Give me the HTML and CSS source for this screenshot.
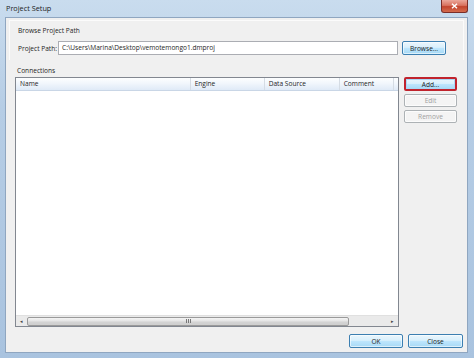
FILE: index.html
```html
<!DOCTYPE html>
<html>
<head>
<meta charset="utf-8">
<link rel="stylesheet" href="styles.css">
</head>
<body>
<div class="window">
  <div class="titlebar">
    <span class="title">Project Setup</span>
    <div class="close-btn">
      <svg width="7" height="6" viewBox="0 0 7 6"><path d="M1 0.8 L6 5.2 M6 0.8 L1 5.2" stroke="#fff" stroke-width="1.5"/></svg>
    </div>
  </div>
  <div class="client">
    <div class="group">
      <div class="group-title">Browse Project Path</div>
      <div class="path-row">
        <span class="label">Project Path:</span>
        <div class="input">C:\Users\Marina\Desktop\vemotemongo1.dmproj</div>
        <div class="btn browse">Browse...</div>
      </div>
    </div>
    <div class="conn-title">Connections</div>
    <div class="conn-row">
      <div class="listview">
        <div class="header">
          <div class="col c-name">Name</div>
          <div class="col c-engine">Engine</div>
          <div class="col c-ds">Data Source</div>
          <div class="col c-comment">Comment</div>
          <div class="col c-rest"></div>
        </div>
        <div class="list-body"></div>
        <div class="hscroll">
          <div class="arrow">&#9666;</div>
          <div class="track"><div class="thumb"><span class="grip"></span></div></div>
          <div class="arrow">&#9656;</div>
        </div>
      </div>
      <div class="side-buttons">
        <div class="btn add">Add...</div>
        <div class="btn disabled">Edit</div>
        <div class="btn disabled">Remove</div>
      </div>
    </div>
    <div class="footer">
      <div class="btn ok">OK</div>
      <div class="btn closeb">Close</div>
    </div>
  </div>
</div>
</body>
</html>
```
FILE: styles.css
```css
* { box-sizing: border-box; }
html, body { margin: 0; padding: 0; }
body {
  width: 474px;
  height: 358px;
  overflow: hidden;
  font-family: "Open Sans", "Noto Sans", sans-serif;
  font-size: 6.6px;
  color: #1e1e1e;
  background: #9fb6cf;
}
.window {
  width: 474px;
  height: 358px;
  display: flex;
  flex-direction: column;
  background: linear-gradient(180deg, #c9dcee 0%, #b6cde5 30%, #a9c3df 100%);
  padding: 0 6px 5px 5px;
}
.titlebar {
  height: 17px;
  display: flex;
  align-items: flex-start;
  justify-content: space-between;
}
.title {
  font-size: 7.3px;
  color: #1b1b1b;
  padding-left: 1px;
  margin-top: 3px;
  white-space: nowrap;
}
.close-btn {
  width: 27px;
  height: 13px;
  border: 1px solid #7a2e28;
  border-top: none;
  border-radius: 0 0 3px 3px;
  background: linear-gradient(180deg, #eba79a 0%, #d9735f 45%, #c3442d 55%, #d46c4e 100%);
  display: flex;
  align-items: center;
  justify-content: center;
}
.client {
  flex: 1;
  background: #f0f0f0;
  border: 1px solid #8fa6c0;
  display: flex;
  flex-direction: column;
}
.group {
  margin: 2px 3px 0 3px;
  border: 1px solid #fbfbfb;
  border-bottom: none;
  padding: 5px 0 0 8px;
  height: 40px;
}
.group-title { line-height: 9px; white-space: nowrap; }
.path-row {
  display: flex;
  align-items: center;
  margin-top: 6px;
}
.label { width: 40px; white-space: nowrap; flex: none; }
.input {
  width: 340px;
  height: 14px;
  border: 1px solid #abadb3;
  background: #fff;
  line-height: 12px;
  padding-left: 3px;
  white-space: nowrap;
  flex: none;
}
.btn {
  height: 14px;
  border: 1px solid #3c7fb1;
  border-radius: 2px;
  background: linear-gradient(180deg, #eaf6fd 0%, #d9f0fc 45%, #bee6fd 50%, #a7d9f5 100%);
  display: flex;
  align-items: center;
  justify-content: center;
  color: #1e1e1e;
  white-space: nowrap;
  box-shadow: inset 0 0 0 1px rgba(255,255,255,0.6);
  flex: none;
}
.browse { width: 44px; margin-left: 4px; }
.conn-title {
  margin: 6px 0 0 11px;
  line-height: 9px;
}
.conn-row {
  display: flex;
  margin-top: 2px;
  height: 250px;
}
.listview {
  margin-left: 9px;
  width: 384px;
  border: 1px solid #828790;
  background: #fff;
  display: flex;
  flex-direction: column;
}
.header {
  display: flex;
  height: 13px;
  background: linear-gradient(180deg, #fdfeff 0%, #f1f6fc 45%, #dfeaf7 100%);
  border-bottom: 1px solid #c9d6e6;
}
.col {
  border-right: 1px solid #d5dce4;
  padding-left: 4px;
  line-height: 12px;
  white-space: nowrap;
}
.c-name { width: 177px; }
.c-engine { width: 75px; }
.c-ds { width: 76px; }
.c-comment { width: 55px; }
.c-rest { flex: 1; border-right: none; }
.list-body { flex: 1; }
.hscroll {
  height: 11px;
  display: flex;
  align-items: center;
  background: #eaeaea;
  border-top: 1px solid #e0e0e0;
}
.arrow {
  width: 11px;
  font-size: 5px;
  color: #444;
  text-align: center;
  line-height: 11px;
}
.track {
  flex: 1;
  height: 9px;
  display: flex;
  align-items: center;
}
.thumb {
  width: 322px;
  height: 9px;
  border: 1px solid #9a9a9a;
  border-radius: 2px;
  background: linear-gradient(180deg, #f4f4f4 0%, #e4e4e4 45%, #d4d4d4 55%, #cfcfcf 100%);
  display: flex;
  align-items: center;
  justify-content: center;
}
.grip {
  width: 5px;
  height: 4px;
  background: repeating-linear-gradient(90deg, #777 0 1px, transparent 1px 2px);
}
.side-buttons {
  display: flex;
  flex-direction: column;
  gap: 3px;
  margin-left: 5px;
  width: 53px;
}
.side-buttons .btn { width: 53px; height: 13px; }
.side-buttons .add {
  border: 2px solid #c0232d;
  height: 14px;
  box-shadow: inset 0 0 0 1px #a9d8f5;
}
.btn.disabled {
  background: #f4f4f4;
  border-color: #adb2b5;
  color: #a0a0a0;
  box-shadow: inset 0 0 0 1px #fcfcfc;
}
.footer {
  display: flex;
  justify-content: flex-end;
  gap: 5px;
  margin-top: 7px;
  padding-right: 4px;
}
.ok { width: 54px; }
.closeb { width: 55px; }
```
